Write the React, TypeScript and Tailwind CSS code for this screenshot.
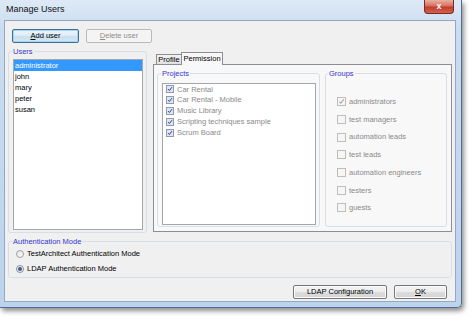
import React from "react";

function Btn({
  children,
  w,
  variant = "normal",
}: {
  children: React.ReactNode;
  w: string;
  variant?: "normal" | "default" | "disabled";
}) {
  const base =
    "h-[14px] flex items-center justify-center rounded-[2px] border leading-none text-[7.5px] ";
  const v =
    variant === "default"
      ? "border-[#3c6f9c] bg-[linear-gradient(180deg,#eef6fc_0%,#dcebf6_50%,#c9dfef_52%,#d4e6f3_100%)] text-black shadow-[inset_0_0_0_1px_#a9d4f0]"
      : variant === "disabled"
      ? "border-[#b7bcc1] bg-[#f4f4f4] text-[#8d8d8d]"
      : "border-[#777] bg-[linear-gradient(180deg,#f4f4f4_0%,#ebebeb_50%,#dddddd_52%,#d4d4d4_100%)] text-black shadow-[inset_0_0_0_1px_#fafafa]";
  return <div className={base + v + " " + w}>{children}</div>;
}

function CheckMark({ color }: { color: string }) {
  return (
    <svg viewBox="0 0 8 8" className="w-full h-full">
      <path d="M1.5 4.2 L3.2 6 L6.6 1.6" fill="none" stroke={color} strokeWidth="1.3" />
    </svg>
  );
}

const projects = [
  "Car Rental",
  "Car Rental - Mobile",
  "Music Library",
  "Scripting techniques sample",
  "Scrum Board",
];

const groups = [
  "administrators",
  "test managers",
  "automation leads",
  "test leads",
  "automation engineers",
  "testers",
  "guests",
];

const users = ["administrator", "john", "mary", "peter", "susan"];

export default function App() {
  return (
    <div className="w-[474px] h-[323px] bg-white overflow-hidden text-[7.5px] text-black font-['Liberation_Sans',Arial,sans-serif]">
      <div className="relative w-[462px] h-[308px] flex flex-col rounded-br-[5px] border-r border-b border-[#4f6d92] bg-[linear-gradient(180deg,#dde9f6_0%,#cadcf0_10%,#bdd3ec_100%)] shadow-[2px_3px_5px_rgba(0,0,0,0.45)]">
        {/* title bar */}
        <div className="h-[20px] flex items-center pl-[6px] text-[9px] text-[#111]">Manage Users</div>
        <div className="absolute right-[7px] top-0 w-[30px] h-[14px] rounded-b-[4px] border border-t-0 border-[#7b2a20] bg-[linear-gradient(180deg,#eab0a5_0%,#d8705e_45%,#c23d2b_55%,#d2624e_100%)] flex items-center justify-center text-white text-[9px] font-bold leading-none">
          x
        </div>

        {/* client area */}
        <div className="ml-[4px] mr-[5px] h-[282px] border border-[#93a9c3] bg-[#f0f0f0] flex flex-col">
          {/* top buttons */}
          <div className="mt-[8px] ml-[7px] flex gap-[7px]">
            <Btn w="w-[67px]" variant="default">
              <span>
                <span className="underline">A</span>dd user
              </span>
            </Btn>
            <Btn w="w-[66px]" variant="disabled">
              <span>
                <span className="underline">D</span>elete user
              </span>
            </Btn>
          </div>

          {/* main row */}
          <div className="mt-[4px] ml-[3px] flex items-start">
            {/* Users */}
            <fieldset className="w-[139px] border border-[#d5dfe5] rounded-[3px]">
              <legend className="ml-[3px] px-[1px] leading-[9px] text-[#3434d0]">Users</legend>
              <div className="pl-[4px] pr-[3px] pb-[2px] pt-[3px]">
                <div className="w-[130px] h-[171px] border border-[#a3a7ad] bg-white">
                  {users.map((u, i) => (
                    <div
                      key={u}
                      className={
                        "h-[11px] leading-[11px] pl-[1px] " +
                        (i === 0 ? "bg-[#3399ff] text-white" : "text-black")
                      }
                    >
                      {u}
                    </div>
                  ))}
                </div>
              </div>
            </fieldset>

            {/* Tab control */}
            <div className="ml-[6px] mt-[5px] w-[299px] flex flex-col">
              <div className="h-[12px] flex items-end pl-[3px]">
                <div className="w-[25px] h-[10px] border border-b-0 border-r-0 border-[#8c8e94] bg-[linear-gradient(180deg,#f2f2f2,#e1e1e1)] flex items-center justify-center leading-none">
                  Profile
                </div>
                <div className="relative z-10 -mb-[1px] w-[42px] h-[13px] border border-b-0 border-[#8c8e94] bg-[#f8f8f8] flex items-center justify-center leading-none pb-[1px]">
                  Permission
                </div>
              </div>
              <div className="h-[168px] border border-[#8c8e94] bg-[#f8f8f8] pt-[4px] pl-[3px] flex items-start">
                {/* Projects */}
                <fieldset className="w-[163px] border border-[#d5dfe5] rounded-[3px]">
                  <legend className="ml-[3px] px-[1px] leading-[9px] text-[#3434d0]">Projects</legend>
                  <div className="pl-[4px] pr-[3px] pb-[1px] pt-[5px]">
                    <div className="w-[154px] h-[142px] border border-[#a3a7ad] bg-white">
                      {projects.map((p) => (
                        <div key={p} className="h-[10.8px] flex items-center pl-[3px] gap-[3px] text-[#8a8a8a]">
                          <div className="w-[8px] h-[8px] border border-[#8f9bb3] bg-[#dfe4ee]">
                            <CheckMark color="#243e8c" />
                          </div>
                          <span className="leading-none">{p}</span>
                        </div>
                      ))}
                    </div>
                  </div>
                </fieldset>

                {/* Groups */}
                <fieldset className="ml-[5px] w-[122px] h-[158px] border border-[#d5dfe5] rounded-[3px]">
                  <legend className="ml-[2px] px-[1px] leading-[9px] text-[#3434d0]">Groups</legend>
                  <div className="pt-[15px] pl-[11px]">
                    {groups.map((g, i) => (
                      <div key={g} className="h-[17.7px] flex items-center gap-[3px] text-[#8a8a8a]">
                        <div className="w-[9px] h-[9px] border border-[#bdbdbd] bg-[#f6f6f6]">
                          {i === 0 && <CheckMark color="#a8a8a8" />}
                        </div>
                        <span className="leading-none">{g}</span>
                      </div>
                    ))}
                  </div>
                </fieldset>
              </div>
            </div>
          </div>

          {/* Authentication Mode */}
          <fieldset className="mt-[4px] ml-[3px] w-[444px] h-[41px] border border-[#d5dfe5] rounded-[3px]">
            <legend className="ml-[3px] px-[1px] leading-[9px] text-[#3434d0]">Authentication Mode</legend>
            <div className="pl-[7px]">
              <div className="h-[15px] flex items-center gap-[2px]">
                <div className="w-[8px] h-[8px] rounded-full border border-[#a0a0a0] bg-[linear-gradient(135deg,#e6e6e6,#fafafa)]" />
                <span className="leading-none ml-[1px]">TestArchitect Authentication Mode</span>
              </div>
              <div className="h-[15px] flex items-center gap-[2px]">
                <div className="w-[8px] h-[8px] rounded-full border border-[#8a8f99] bg-[#eef1f5] flex items-center justify-center">
                  <div className="w-[4px] h-[4px] rounded-full bg-[#3d5a8a]" />
                </div>
                <span className="leading-none ml-[1px]">LDAP Authentication Mode</span>
              </div>
            </div>
          </fieldset>

          {/* bottom buttons */}
          <div className="mt-[7px] pr-[8px] flex justify-end gap-[7px]">
            <Btn w="w-[94px]">LDAP Configuration</Btn>
            <Btn w="w-[53px]">
              <span>
                <span className="underline">O</span>K
              </span>
            </Btn>
          </div>
        </div>
      </div>
    </div>
  );
}
